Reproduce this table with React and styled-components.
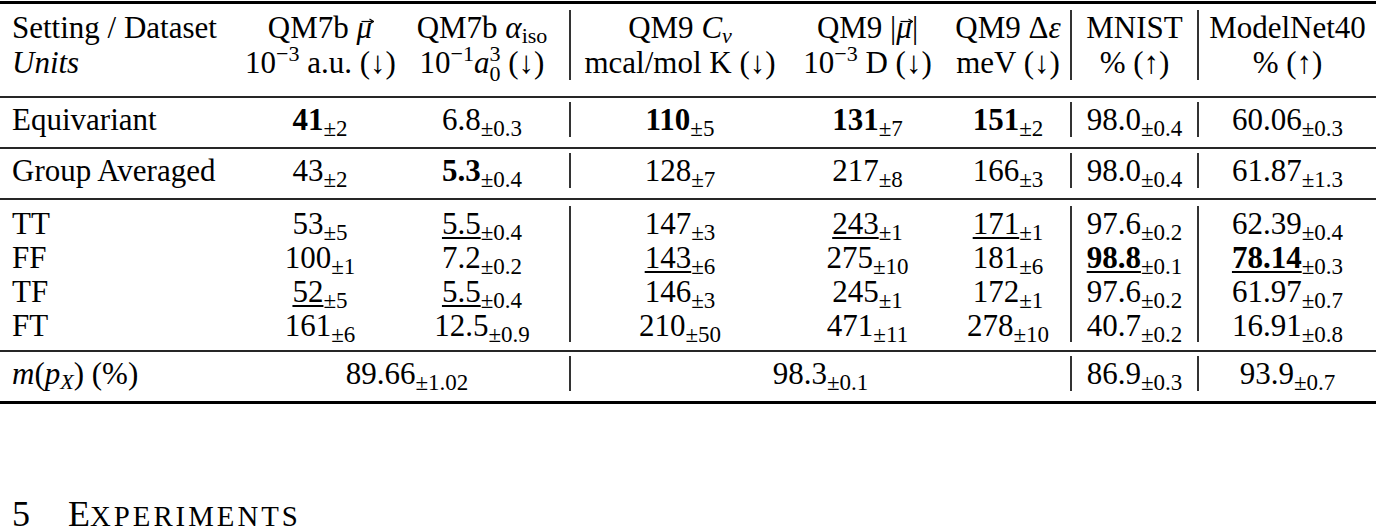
import React from "react";
import styled, { createGlobalStyle } from "styled-components";

const Global = createGlobalStyle`
  html, body { margin: 0; padding: 0; background: #fff; }
  body { font-family: "Liberation Serif", "Times New Roman", serif; color: #000; }
`;

const COLS = "245px 150px 174px 220px 157px 124px 127px 179px";

const Page = styled.div`
  width: 1380px;
  height: 532px;
  overflow: hidden;
`;

const Table = styled.div`
  width: 1376px;
  font-size: 31px;
`;

const Rule = styled.div`
  height: ${(p) => (p.$heavy ? 3 : 2)}px;
  background: ${(p) => (p.$heavy ? "#000" : "#262626")};
  margin-top: ${(p) => p.$mt || 0}px;
`;

const Section = styled.div`
  display: grid;
  grid-template-columns: ${COLS};
  grid-auto-rows: ${(p) => p.$pitch || 35}px;
  padding: ${(p) => p.$pt}px 0 ${(p) => p.$pb}px;
`;

const HeadSection = styled(Section)`
  grid-auto-rows: auto;
`;

const Cell = styled.div`
  grid-column: ${(p) => (p.$span ? `span ${p.$span}` : "auto")};
  line-height: 35px;
  white-space: nowrap;
  text-align: ${(p) => (p.$left ? "left" : "center")};
  padding-left: ${(p) => (p.$left ? "12px" : "0")};
  border-left: ${(p) => (p.$bar ? "2px solid #333" : "none")};
`;

const Line = styled.div`
  font-style: ${(p) => (p.$italic ? "italic" : "normal")};
`;

const I = styled.span`
  font-style: italic;
`;

const Sub = styled.span`
  font-size: 22px;
  line-height: 0;
  vertical-align: -5px;
  font-style: ${(p) => (p.$italic ? "italic" : "normal")};
`;

const PM = styled.span`
  font-size: 23px;
  line-height: 0;
  vertical-align: -6px;
`;

const Sup = styled.span`
  font-size: 22px;
  line-height: 0;
  vertical-align: 12px;
`;

const Stack = styled.span`
  display: inline-flex;
  flex-direction: column;
  font-size: 22px;
  line-height: 20px;
  vertical-align: 12px;
  margin: -8px 0;
`;

const VecWrap = styled.span`
  position: relative;
  display: inline-block;
  font-style: italic;
`;

const VecArrow = styled.svg`
  position: absolute;
  left: 4px;
  top: 8px;
  width: 13px;
  height: 7px;
`;

const Num = styled.span`
  font-weight: ${(p) => (p.$bold ? 700 : 400)};
  text-decoration: ${(p) => (p.$u ? "underline" : "none")};
  text-decoration-thickness: 1.5px;
  text-underline-offset: 3px;
`;

const Heading = styled.h2`
  margin: 95px 0 0;
  padding-left: 12px;
  display: flex;
  font-size: 36px;
  font-weight: 400;
  line-height: 30px;
`;

const SecNum = styled.span`
  width: 56px;
`;

const SecTitle = styled.span`
  white-space: nowrap;
`;

const SmallCap = styled.span`
  font-size: 0.8em;
  letter-spacing: 3px;
  text-transform: uppercase;
`;

const Vec = ({ ch }) => (
  <VecWrap>
    {ch}
    <VecArrow viewBox="0 0 13 7">
      <path d="M0.5 3.5 H11.5" stroke="#000" strokeWidth="1.2" fill="none" />
      <path d="M8.5 1 L12.5 3.5 L8.5 6" stroke="#000" strokeWidth="1.2" fill="none" />
    </VecArrow>
  </VecWrap>
);

const Down = () => <>(↓)</>;
const Up = () => <>(↑)</>;

const Val = ({ v }) => {
  const [n, pm, flags = ""] = v.split("|");
  return (
    <>
      <Num $bold={flags.includes("b")} $u={flags.includes("u")}>
        {n}
      </Num>
      <PM>±{pm}</PM>
    </>
  );
};

const BARS = [false, false, false, true, false, false, true, true];

const rows = [
  ["TT", "53|5", "5.5|0.4|u", "147|3", "243|1|u", "171|1|u", "97.6|0.2", "62.39|0.4"],
  ["FF", "100|1", "7.2|0.2", "143|6|u", "275|10", "181|6", "98.8|0.1|bu", "78.14|0.3|bu"],
  ["TF", "52|5|u", "5.5|0.4|u", "146|3", "245|1", "172|1", "97.6|0.2", "61.97|0.7"],
  ["FT", "161|6", "12.5|0.9", "210|50", "471|11", "278|10", "40.7|0.2", "16.91|0.8"],
];

const DataRow = ({ r }) => (
  <>
    <Cell $left>{r[0]}</Cell>
    {r.slice(1).map((v, i) => (
      <Cell key={i} $bar={BARS[i + 1]}>
        <Val v={v} />
      </Cell>
    ))}
  </>
);

export default function App() {
  return (
    <Page>
      <Global />
      <Table>
        <Rule $heavy $mt={1} />
        <HeadSection $pt={6} $pb={16}>
          <Cell $left>
            <Line>Setting / Dataset</Line>
            <Line $italic>Units</Line>
          </Cell>
          <Cell>
            <Line>
              QM7b <Vec ch="μ" />
            </Line>
            <Line>
              10<Sup>−3</Sup> a.u. <Down />
            </Line>
          </Cell>
          <Cell>
            <Line>
              QM7b <I>α</I>
              <Sub>iso</Sub>
            </Line>
            <Line>
              10<Sup>−1</Sup>
              <I>a</I>
              <Stack>
                <span>3</span>
                <span>0</span>
              </Stack>{" "}
              <Down />
            </Line>
          </Cell>
          <Cell $bar>
            <Line>
              QM9 <I>C</I>
              <Sub $italic>v</Sub>
            </Line>
            <Line>
              mcal/mol K <Down />
            </Line>
          </Cell>
          <Cell>
            <Line>
              QM9 |<Vec ch="μ" />|
            </Line>
            <Line>
              10<Sup>−3</Sup> D <Down />
            </Line>
          </Cell>
          <Cell>
            <Line>
              QM9 Δ<I>ε</I>
            </Line>
            <Line>
              meV <Down />
            </Line>
          </Cell>
          <Cell $bar>
            <Line>MNIST</Line>
            <Line>
              % <Up />
            </Line>
          </Cell>
          <Cell $bar>
            <Line>ModelNet40</Line>
            <Line>
              % <Up />
            </Line>
          </Cell>
        </HeadSection>
        <Rule />
        <Section $pt={4} $pb={10}>
          <DataRow r={["Equivariant", "41|2|b", "6.8|0.3", "110|5|b", "131|7|b", "151|2|b", "98.0|0.4", "60.06|0.3"]} />
        </Section>
        <Rule />
        <Section $pt={4} $pb={10}>
          <DataRow r={["Group Averaged", "43|2", "5.3|0.4|b", "128|7", "217|8", "166|3", "98.0|0.4", "61.87|1.3"]} />
        </Section>
        <Rule />
        <Section $pt={6} $pb={8} $pitch={34}>
          {rows.map((r) => (
            <DataRow key={r[0]} r={r} />
          ))}
        </Section>
        <Rule />
        <Section $pt={4} $pb={10}>
          <Cell $left>
            <I>m</I>(<I>p</I>
            <Sub $italic>X</Sub>) (%)
          </Cell>
          <Cell $span={2}>
            <Val v="89.66|1.02" />
          </Cell>
          <Cell $span={3} $bar>
            <Val v="98.3|0.1" />
          </Cell>
          <Cell $bar>
            <Val v="86.9|0.3" />
          </Cell>
          <Cell $bar>
            <Val v="93.9|0.7" />
          </Cell>
        </Section>
        <Rule $heavy />
      </Table>
      <Heading>
        <SecNum>5</SecNum>
        <SecTitle>
          E<SmallCap>xperiments</SmallCap>
        </SecTitle>
      </Heading>
    </Page>
  );
}
